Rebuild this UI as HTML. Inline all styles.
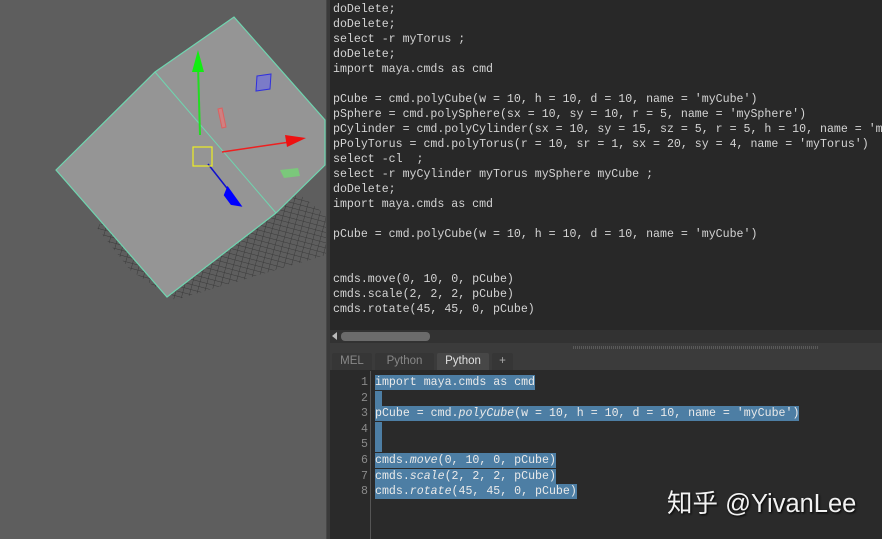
<!DOCTYPE html>
<html><head><meta charset="utf-8"><style>
body{margin:0;width:882px;height:539px;overflow:hidden;background:#5d5d5d;position:relative;font-family:"Liberation Mono",monospace;}
#vp{position:absolute;left:0;top:0;width:326px;height:539px;background:#5e5e5e;overflow:hidden;}
#div{position:absolute;left:326px;top:0;width:4px;height:539px;background:#3a3a3a;border-left:1px solid #474747;}
#top{position:absolute;left:330px;top:0;width:552px;height:330px;background:#282828;overflow:hidden;}
pre{margin:0;font-family:"Liberation Mono",monospace;font-size:11.6px;color:#d4d4d4;}
#top pre{position:absolute;left:3px;top:2px;line-height:15px;}
#sb{position:absolute;left:330px;top:330px;width:552px;height:13px;background:#323232;}
#thumb{position:absolute;left:341px;top:332px;width:89px;height:9px;background:#6b6b6b;border-radius:4px;}
#sep{position:absolute;left:330px;top:343px;width:552px;height:27px;background:#3b3b3b;}
#dots{position:absolute;left:573px;top:346px;width:245px;height:3px;background:repeating-linear-gradient(90deg,#5a5a5a 0 1px,transparent 1px 2px);}
.tab{position:absolute;top:353px;height:17px;background:#363636;color:#888;font-family:"Liberation Sans",sans-serif;font-size:11.5px;line-height:17px;text-align:center;border-radius:2px 2px 0 0;}
#ed{position:absolute;left:330px;top:370px;width:552px;height:169px;background:#2a2a2a;}
#gut{position:absolute;left:370px;top:371px;width:1px;height:168px;background:#555;}
#ln{position:absolute;left:330px;top:375px;width:38px;text-align:right;color:#8a8a8a;line-height:15.6px;}
#code{position:absolute;left:375px;top:375px;line-height:15.6px;}
.h{background:#4d7ea4;color:#eaeaea;padding:1px 0;}
#wm{position:absolute;left:667px;top:483px;color:#f2f2f2;font-family:"Liberation Sans","Noto Sans CJK SC",sans-serif;font-size:25.5px;text-shadow:1px 1px 2px #000;white-space:nowrap;}
</style></head><body>
<div id="vp">
<svg width="326" height="539">
<defs><pattern id="g" width="7" height="5" patternUnits="userSpaceOnUse" patternTransform="rotate(15)"><path d="M0 0H7M0 0V5" stroke="#3a3a3a" stroke-width="1" fill="none"/></pattern></defs>
<polygon points="95,225 300,195 326,215 326,255 175,300 130,270" fill="url(#g)"/>
<polygon points="234,17 325,120 325,165 276,213 167,297 56,170 155,72" fill="#959595" stroke="#6fd6b0" stroke-width="1.2"/>
<line x1="155" y1="72" x2="276" y2="213" stroke="#6fd6b0" stroke-width="1"/>
<line x1="200" y1="135" x2="198" y2="65" stroke="#22dd22" stroke-width="2"/>
<polygon points="198,50 192,72 204,72" fill="#11ee11"/>
<line x1="222" y1="152" x2="290" y2="142" stroke="#ee2020" stroke-width="1.5"/>
<polygon points="306,138 285,135 287,147" fill="#ee1111"/>
<line x1="208" y1="164" x2="230" y2="192" stroke="#1010cc" stroke-width="1.5"/>
<polygon points="228,190 238,204 232,203 226,195" fill="#0000ff" stroke="#0000ff" stroke-width="4"/>
<rect x="193" y="147" width="19" height="19" fill="none" stroke="#eeee22" stroke-width="1.2"/>
<polygon points="257,76 271,74 270,89 256,91" fill="#7b7bc8" stroke="#3030dd"/>
<polygon points="218,109 222,108 226,127 222,128" fill="#d08080" stroke="#dd6060"/>
<polygon points="280,170 298,168 300,176 284,178" fill="#7bc87b"/>
</svg></div>
<div id="div"></div>
<div id="top"><pre>doDelete;
doDelete;
select -r myTorus ;
doDelete;
import maya.cmds as cmd

pCube = cmd.polyCube(w = 10, h = 10, d = 10, name = 'myCube')
pSphere = cmd.polySphere(sx = 10, sy = 10, r = 5, name = 'mySphere')
pCylinder = cmd.polyCylinder(sx = 10, sy = 15, sz = 5, r = 5, h = 10, name = 'myCylinder')
pPolyTorus = cmd.polyTorus(r = 10, sr = 1, sx = 20, sy = 4, name = 'myTorus')
select -cl  ;
select -r myCylinder myTorus mySphere myCube ;
doDelete;
import maya.cmds as cmd

pCube = cmd.polyCube(w = 10, h = 10, d = 10, name = 'myCube')


cmds.move(0, 10, 0, pCube)
cmds.scale(2, 2, 2, pCube)
cmds.rotate(45, 45, 0, pCube)</pre></div>
<div id="sb"></div><div id="thumb"></div>
<div style="position:absolute;left:332px;top:332px;width:0;height:0;border:4px solid transparent;border-right:5px solid #bbb;border-left:0"></div>
<div id="sep"></div><div id="dots"></div>
<div class="tab" style="left:332px;width:40px">MEL</div>
<div class="tab" style="left:375px;width:59px">Python</div>
<div class="tab" style="left:437px;width:52px;background:#474747;color:#e0e0e0">Python</div>
<div class="tab" style="left:492px;width:21px;color:#aaa">+</div>
<div id="ed"></div><div id="gut"></div>
<pre id="ln">1
2
3
4
5
6
7
8</pre>
<pre id="code"><span class="h">import maya.cmds as cmd</span>
<span class="h"> </span>
<span class="h">pCube = cmd.<i>polyCube</i>(w = 10, h = 10, d = 10, name = 'myCube')</span>
<span class="h"> </span>
<span class="h"> </span>
<span class="h">cmds.<i>move</i>(0, 10, 0, pCube)</span>
<span class="h">cmds.<i>scale</i>(2, 2, 2, pCube)</span>
<span class="h">cmds.<i>rotate</i>(45, 45, 0, pCube)</span></pre>
<div id="wm">知乎 @YivanLee</div>
</body></html>
